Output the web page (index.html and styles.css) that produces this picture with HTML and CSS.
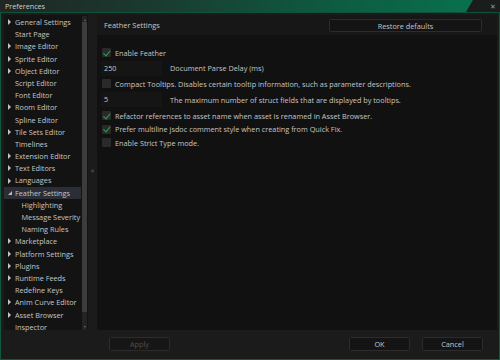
FILE: index.html
```html
<!DOCTYPE html>
<html>
<head>
<meta charset="utf-8">
<link rel="stylesheet" href="styles.css">
</head>
<body>
<div class="window">
  <div class="titlebar">
    <span class="title">Preferences</span>
    <span class="controls"><span class="close">✕</span></span>
  </div>
  <div class="body">
    <div class="main">
      <div class="tree">
        <ul class="items">
          <li class="item"><span class="tri"></span>General Settings</li>
          <li class="item"><span class="tri none"></span>Start Page</li>
          <li class="item"><span class="tri"></span>Image Editor</li>
          <li class="item"><span class="tri"></span>Sprite Editor</li>
          <li class="item"><span class="tri"></span>Object Editor</li>
          <li class="item"><span class="tri none"></span>Script Editor</li>
          <li class="item"><span class="tri none"></span>Font Editor</li>
          <li class="item"><span class="tri"></span>Room Editor</li>
          <li class="item"><span class="tri none"></span>Spline Editor</li>
          <li class="item"><span class="tri"></span>Tile Sets Editor</li>
          <li class="item"><span class="tri none"></span>Timelines</li>
          <li class="item"><span class="tri"></span>Extension Editor</li>
          <li class="item"><span class="tri"></span>Text Editors</li>
          <li class="item"><span class="tri"></span>Languages</li>
          <li class="item selected"><span class="tri open"></span>Feather Settings</li>
          <li class="item child">Highlighting</li>
          <li class="item child">Message Severity</li>
          <li class="item child">Naming Rules</li>
          <li class="item"><span class="tri"></span>Marketplace</li>
          <li class="item"><span class="tri"></span>Platform Settings</li>
          <li class="item"><span class="tri"></span>Plugins</li>
          <li class="item"><span class="tri"></span>Runtime Feeds</li>
          <li class="item"><span class="tri none"></span>Redefine Keys</li>
          <li class="item"><span class="tri"></span>Anim Curve Editor</li>
          <li class="item"><span class="tri"></span>Asset Browser</li>
          <li class="item"><span class="tri none"></span>Inspector</li>
        </ul>
        <div class="scrollbar">
          <span class="arrow up"></span>
          <span class="thumb"></span>
          <span class="arrow down"></span>
        </div>
      </div>
      <div class="splitter"><span class="collapse">«</span></div>
      <div class="panel">
        <div class="header">
          <span class="heading">Feather Settings</span>
          <button class="btn restore">Restore defaults</button>
        </div>
        <div class="content">
          <div class="row check-row"><span class="cb checked"></span><span class="label">Enable Feather</span></div>
          <div class="row input-row"><span class="field">250</span><span class="flabel">Document Parse Delay (ms)</span></div>
          <div class="row check-row"><span class="cb"></span><span class="label">Compact Tooltips. Disables certain tooltip information, such as parameter descriptions.</span></div>
          <div class="row input-row tall"><span class="field">5</span><span class="flabel">The maximum number of struct fields that are displayed by tooltips.</span></div>
          <div class="row check-row"><span class="cb checked"></span><span class="label">Refactor references to asset name when asset is renamed in Asset Browser.</span></div>
          <div class="row check-row tight"><span class="cb checked"></span><span class="label">Prefer multiline jsdoc comment style when creating from Quick Fix.</span></div>
          <div class="row check-row tight"><span class="cb"></span><span class="label">Enable Strict Type mode.</span></div>
        </div>
      </div>
    </div>
    <div class="footer">
      <button class="btn apply" disabled>Apply</button>
      <span class="spacer"></span>
      <button class="btn ok">OK</button>
      <button class="btn cancel">Cancel</button>
    </div>
  </div>
</div>
</body>
</html>
```

FILE: styles.css
```css
* { box-sizing: border-box; }
html, body {
  margin: 0;
  padding: 0;
  width: 500px;
  height: 360px;
  background: #1b1b1b;
  overflow: hidden;
}
body {
  font-family: "Open Sans", "Noto Sans", sans-serif;
  font-size: 7.3px;
  color: #c6c6c6;
}
.window {
  width: 500px;
  height: 360px;
  display: flex;
  flex-direction: column;
}
.titlebar {
  height: 12px;
  flex: none;
  display: flex;
  align-items: center;
  background: linear-gradient(90deg, #1f2623 0%, #1a3a2f 30%, #0e5a41 65%, #08744f 100%);
}
.title {
  padding-left: 5px;
  font-size: 7.2px;
  color: #c9cfcc;
  flex: 1;
  line-height: 12px;
}
.controls {
  width: 37px;
  height: 12px;
  background: #1b1c1c;
  clip-path: polygon(10px 0, 100% 0, 100% 100%, 3px 100%);
  display: flex;
  align-items: center;
  justify-content: flex-end;
  padding-right: 4px;
}
.close {
  font-size: 7px;
  color: #9a9a9a;
  line-height: 1;
}
.body {
  flex: 1;
  display: flex;
  flex-direction: column;
  border: 1px solid #10583d;
  border-top-color: #0f5139;
  background: #1b1b1b;
}
.main {
  height: 317px;
  display: flex;
  padding: 2px 2px 0 3px;
}
.tree {
  width: 84px;
  background: #131313;
  display: flex;
}
.items {
  list-style: none;
  margin: 0;
  padding: 1px 0 0 0;
  flex: 1;
}
.item {
  height: 12.2px;
  line-height: 12.2px;
  display: flex;
  align-items: center;
  white-space: nowrap;
  width: 77px;
  overflow: hidden;
}
.item.selected {
  background: #2b2e36;
}
.item.child {
  padding-left: 17.5px;
}
.tri {
  width: 11px;
  height: 6px;
  flex: none;
  position: relative;
}
.tri::before {
  content: "";
  position: absolute;
  left: 4px;
  top: 0;
  border-left: 3.5px solid #c4c4c4;
  border-top: 3px solid transparent;
  border-bottom: 3px solid transparent;
}
.tri.none::before { display: none; }
.tri.open::before {
  left: 4px;
  top: 1px;
  border: none;
  width: 0;
  height: 0;
  border-right: 4px solid #b8b8b8;
  border-top: 4px solid transparent;
}
.scrollbar {
  width: 5px;
  margin: 1px 1px 0 0;
  background: #232323;
  display: flex;
  flex-direction: column;
  align-items: center;
}
.thumb {
  width: 5px;
  height: 290px;
  background: #3c3c3c;
  margin-top: 1px;
}
.arrow {
  width: 0;
  height: 0;
  border-left: 1.5px solid transparent;
  border-right: 1.5px solid transparent;
}
.arrow.up {
  border-bottom: 2px solid #6a6a6a;
  margin-top: 3px;
}
.arrow.down {
  border-top: 2px solid #6a6a6a;
  margin-top: auto;
  margin-bottom: 2px;
}
.splitter {
  width: 9px;
  display: flex;
  align-items: center;
  justify-content: center;
}
.collapse {
  font-size: 7px;
  color: #6c6c6c;
  margin-bottom: 4px;
}
.panel {
  flex: 1;
  display: flex;
  flex-direction: column;
  background: #111111;
}
.header {
  height: 20px;
  flex: none;
  background: #171717;
  display: flex;
  align-items: center;
  padding: 0 15px 0 7px;
}
.heading {
  flex: 1;
  font-size: 7.4px;
}
.btn {
  font-family: "Open Sans", "Noto Sans", sans-serif;
  font-size: 7.3px;
  color: #c6c6c6;
  background: #141414;
  border: 1px solid #2c2c2c;
  border-radius: 1.5px;
  height: 14px;
  padding: 0;
  line-height: 12px;
}
.restore {
  width: 153px;
  height: 13px;
}
.content {
  flex: 1;
  padding: 11px 0 0 4px;
  display: flex;
  flex-direction: column;
  gap: 1.5px;
}
.row {
  display: flex;
  align-items: center;
  white-space: nowrap;
}
.check-row {
  height: 13px;
  padding-left: 1px;
}
.input-row {
  height: 15px;
}
.input-row.tall { height: 16px; }
.check-row.tight { margin-top: -1px; }
.cb {
  width: 9px;
  height: 9px;
  background: #2a2a2a;
  border-radius: 1px;
  flex: none;
  position: relative;
  margin-right: 4px;
}
.cb.checked::after {
  content: "";
  position: absolute;
  left: 3px;
  top: 0.5px;
  width: 3px;
  height: 5.5px;
  border-right: 1.6px solid #2fa14c;
  border-bottom: 1.6px solid #2fa14c;
  transform: rotate(40deg);
}
.field {
  width: 61px;
  height: 15px;
  background: #151515;
  line-height: 15px;
  padding-left: 3px;
  margin-right: 8px;
  flex: none;
}
.footer {
  flex: 1;
  display: flex;
  align-items: center;
  padding: 0 16px 2px 108px;
  gap: 12px;
}
.spacer { flex: 1; }
.apply, .ok, .cancel {
  width: 61px;
}
.apply {
  color: #505050;
  background: #161616;
}
```
